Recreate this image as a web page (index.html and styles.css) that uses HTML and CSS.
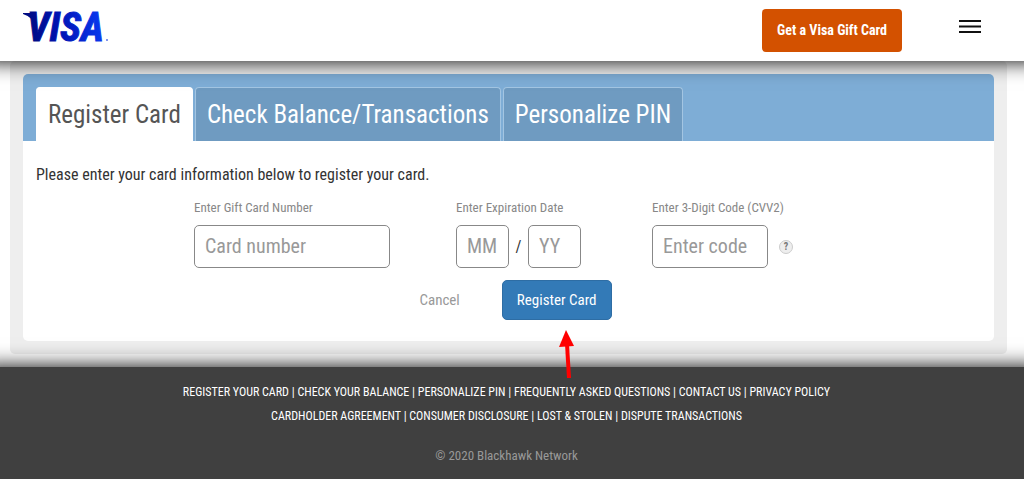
FILE: index.html
```html
<!DOCTYPE html>
<html lang="en">
<head>
  <meta charset="UTF-8">
  <meta name="viewport" content="width=device-width, initial-scale=1.0">
  <title>Register Card</title>
  <link rel="stylesheet" href="styles.css">
</head>
<body>
  <header class="site-header">
    <a href="#" class="logo" aria-label="Visa">
      <svg width="90" height="56" viewBox="0 0 90 56">
        <defs>
          <linearGradient id="visa-blue" gradientUnits="userSpaceOnUse" x1="0" y1="32" x2="82" y2="20">
            <stop offset="0" stop-color="#000a78"></stop>
            <stop offset="0.45" stop-color="#0013b4"></stop>
            <stop offset="1" stop-color="#0a3cf5"></stop>
          </linearGradient>
        </defs>
        <path d="M0 13H9Q12 13 12.500 16L14 28Q10 17 0 14Z" fill="url(#visa-blue)"></path>
        <text x="4" y="41" class="logo-text" fill="url(#visa-blue)" stroke="url(#visa-blue)">VISA</text>
        <circle cx="84" cy="40" r="1" fill="#5c74e8"></circle>
      </svg>
    </a>
    <div class="header-actions">
      <a href="#" class="gift-button">Get a Visa Gift Card</a>
      <button type="button" class="menu-button" aria-label="Menu">
        <svg width="22" height="14" viewBox="0 0 22 14" stroke="#111" stroke-width="2">
          <path d="M0 2H22M0 7.500H22M0 13H22"></path>
        </svg>
      </button>
    </div>
  </header>

  <main class="wrapper">
    <div class="frame">
      <div class="card">
        <nav class="tabs">
          <button type="button" class="tab active">Register Card</button>
          <button type="button" class="tab">Check Balance/Transactions</button>
          <button type="button" class="tab">Personalize PIN</button>
        </nav>

        <form class="register-form">
          <p class="intro">Please enter your card information below to register your card.</p>
          <div class="fields">
            <div class="field">
              <label for="card-number">Enter Gift Card Number</label>
              <input type="text" id="card-number" class="number" placeholder="Card number">
            </div>
            <div class="field">
              <label for="month">Enter Expiration Date</label>
              <div class="field-row">
                <input type="text" id="month" class="date" placeholder="MM">
                <span>/</span>
                <input type="text" id="year" class="date" placeholder="YY" aria-label="Year">
              </div>
            </div>
            <div class="field">
              <label for="code">Enter 3-Digit Code (CVV2)</label>
              <div class="field-row">
                <input type="text" id="code" class="code" placeholder="Enter code">
                <button type="button" class="help">?</button>
              </div>
            </div>
          </div>
          <div class="form-actions">
            <a href="#" class="cancel">Cancel</a>
            <div class="submit-wrap">
              <button type="submit" class="submit">Register Card</button>
              <svg class="arrow" width="16" height="50" viewBox="0 0 16 50">
                <path d="M8 14L10 48" stroke="#f00" stroke-width="4"></path>
                <path d="M7 0L15 16L0 17Z" fill="#f00"></path>
              </svg>
            </div>
          </div>
        </form>
      </div>
    </div>
  </main>

  <footer class="site-footer">
    <div class="footer-links">
      <a href="#">REGISTER YOUR CARD</a> | <a href="#">CHECK YOUR BALANCE</a> | <a href="#">PERSONALIZE PIN</a> | <a href="#">FREQUENTLY ASKED QUESTIONS</a> | <a href="#">CONTACT US</a> | <a href="#">PRIVACY POLICY</a>
    </div>
    <div class="footer-links">
      <a href="#">CARDHOLDER AGREEMENT</a> | <a href="#">CONSUMER DISCLOSURE</a> | <a href="#">LOST &amp; STOLEN</a> | <a href="#">DISPUTE TRANSACTIONS</a>
    </div>
    <p class="copyright">© 2020 Blackhawk Network</p>
  </footer>
</body>
</html>
```
FILE: styles.css
```css
* {
  margin: 0;
  padding: 0;
  box-sizing: border-box;
}

body {
  display: flex;
  flex-direction: column;
  min-height: 100vh;
  font-family: "Roboto Condensed", "Liberation Sans Narrow", Roboto, sans-serif;
  font-size: 16px;
  color: #333;
  background-color: #fff;
}

a {
  text-decoration: none;
}

button,
input {
  font-family: inherit;
}

/* Header */
.site-header {
  position: relative;
  z-index: 2;
  display: flex;
  justify-content: space-between;
  padding: 0 43px 5px 23px;
  background-color: #fff;
  box-shadow: 0 -20px 20px 20px #000;
}

.logo svg {
  display: block;
}

.logo-text {
  font-size: 40px;
  font-weight: bold;
  font-style: italic;
}

.header-actions {
  display: flex;
  align-items: flex-start;
  gap: 57px;
  padding-top: 9px;
}

.gift-button {
  padding: 0 15px;
  font-size: 14px;
  font-weight: bold;
  line-height: 43px;
  color: #fff;
  background-color: #d35100;
  border-radius: 4px;
}

.menu-button {
  padding-top: 10px;
  border: none;
  background: none;
  cursor: pointer;
}

.menu-button svg {
  display: block;
}

/* Card */
.wrapper {
  padding: 0 17px 13px 10px;
}

.frame {
  padding: 13px;
  background-color: #eee;
  border-radius: 5px;
}

.card {
  background-color: #fff;
  border-radius: 5px;
}

.tabs {
  display: flex;
  gap: 2px;
  padding: 13px 13px 0;
  background-color: #7eadd6;
  border-radius: 5px 5px 0 0;
}

.tab {
  height: 54px;
  padding: 0 11px;
  font-size: 25px;
  color: #fff;
  background-color: #6f9bc1;
  border: 1px solid #a3c5e2;
  border-bottom: none;
  border-radius: 4px 4px 0 0;
  cursor: pointer;
}

.tab.active {
  color: #555;
  background-color: #fff;
  border-color: #fff;
}

/* Form */
.register-form {
  padding: 24px 13px 21px;
}

.intro {
  line-height: 20px;
}

.fields {
  display: grid;
  grid-template-columns: 262px 196px 171px;
  justify-content: center;
  margin-top: 13px;
}

.field label {
  display: block;
  margin-bottom: 7px;
  font-size: 13px;
  line-height: 20px;
  color: #888;
}

.field-row {
  display: flex;
  align-items: center;
}

.field-row span {
  width: 19px;
  text-align: center;
}

.field input {
  display: block;
  height: 43px;
  padding: 0 10px 2px;
  font-size: 20px;
  color: #555;
  background-color: #fff;
  border: 1px solid #888;
  border-radius: 5px;
}

.field input::placeholder {
  color: #999;
}

.field .number {
  width: 196px;
}

.field .date {
  width: 53px;
}

.field .code {
  width: 116px;
}

.help {
  width: 14px;
  height: 14px;
  margin-left: 11px;
  font-size: 10px;
  font-weight: bold;
  line-height: 12px;
  color: #777;
  background-color: #eee;
  border: 1px solid #ccc;
  border-radius: 50%;
}

.form-actions {
  display: flex;
  justify-content: center;
  align-items: center;
  gap: 28px;
  margin-top: 12px;
}

.cancel {
  padding: 0 14px;
  font-size: 15px;
  color: #999;
}

.submit-wrap {
  position: relative;
}

.submit {
  display: block;
  height: 40px;
  padding: 0 14px;
  font-size: 15px;
  color: #fff;
  background-color: #337ab7;
  border: 1px solid #2e6da4;
  border-radius: 5px;
  cursor: pointer;
}

.arrow {
  position: absolute;
  z-index: 3;
  top: 50px;
  left: 57px;
}

/* Footer */
.site-footer {
  flex: 1;
  padding: 13px 17px 12px 6px;
  font-size: 12px;
  line-height: 24px;
  text-align: center;
  color: #fff;
  background-color: #404040;
  box-shadow: 0 20px 20px 20px #000;
}

.footer-links a {
  color: #fff;
}

.copyright {
  margin-top: 16px;
  font-size: 13px;
  color: #999;
}
```
